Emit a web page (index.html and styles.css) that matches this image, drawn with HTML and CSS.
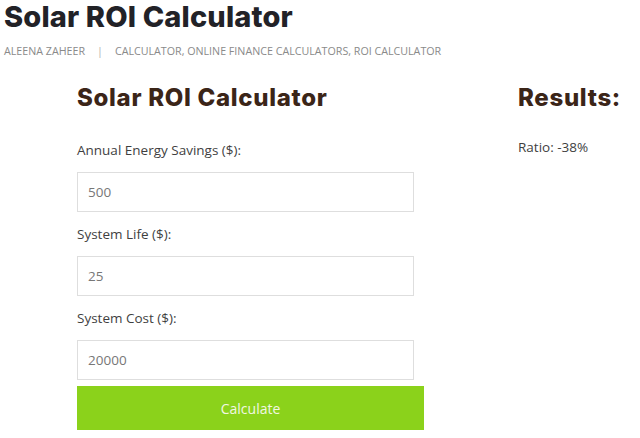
FILE: index.html
```html
<!DOCTYPE html>
<html lang="en">
<head>
    <meta charset="UTF-8">
    <meta name="viewport" content="width=device-width, initial-scale=1.0">
    <title>Solar ROI Calculator</title>
    <link rel="stylesheet" href="styles.css">
</head>
<body>
    <div class="page">
        <h1 class="entry-title">Solar ROI Calculator</h1>
        <div class="entry-meta">
            <span>ALEENA ZAHEER</span>
            <span class="sep">|</span>
            <span>CALCULATOR, ONLINE FINANCE CALCULATORS, ROI CALCULATOR</span>
        </div>

        <div class="calc">
            <!-- formulario -->
            <div class="calc-form">
                <h2>Solar ROI Calculator</h2>
                <label for="savings">Annual Energy Savings ($):</label>
                <input type="text" id="savings" value="500">
                <label for="life">System Life ($):</label>
                <input type="text" id="life" value="25">
                <label for="cost">System Cost ($):</label>
                <input type="text" id="cost" value="20000">
                <button class="btn-calc">Calculate</button>
            </div>
            <!-- resultados -->
            <div class="calc-results">
                <h2>Results:</h2>
                <p>Ratio: -38%</p>
            </div>
        </div>
    </div>
</body>
</html>
```

FILE: styles.css
```css
body {
    margin: 0;
    padding: 0;
    background-color: #fff;
    font-family: "Open Sans", "Liberation Sans", sans-serif;
    color: #3a3a3a;
}

.page {
    padding: 2px 4px 0;
}

.entry-title {
    font-family: "Inter", "DejaVu Sans", sans-serif;
    font-weight: 800;
    font-size: 29px;
    letter-spacing: 0.15px;
    line-height: 30px;
    color: #222227;
    margin: 0;
}

.entry-meta {
    display: flex;
    gap: 12px;
    font-size: 10.7px;
    color: #8a8a8a;
    margin-top: 12px;
    line-height: 14px;
}

.entry-meta .sep {
    color: #b0b0b0;
}

.calc {
    display: flex;
    margin-top: 26px;
    padding-left: 73px;
}

.calc-form {
    width: 347px;
    display: flex;
    flex-direction: column;
}

.calc h2 {
    font-family: "Inter", "DejaVu Sans", sans-serif;
    font-weight: 800;
    font-size: 24px;
    letter-spacing: 0.7px;
    line-height: 28px;
    color: #3b2518;
    margin: 0 0 29px;
}

.calc-form label {
    font-size: 13.5px;
    color: #3f3f3f;
    line-height: 18px;
    margin-bottom: 13px;
}

.calc-form input {
    width: 337px;
    height: 40px;
    box-sizing: border-box;
    border: 1px solid #dedede;
    padding: 0 10px;
    font-family: "Open Sans", "Liberation Sans", sans-serif;
    font-size: 13.5px;
    color: #777;
    margin-bottom: 13px;
    outline: none;
}

.btn-calc {
    margin-top: -7px;
    height: 44px;
    width: 347px;
    border: none;
    background-color: #8bd21b;
    color: #f2f7e4;
    font-family: "Open Sans", "Liberation Sans", sans-serif;
    font-size: 14px;
    cursor: pointer;
}

.calc-results {
    margin-left: 94px;
}

.calc-results p {
    font-size: 13.5px;
    color: #3f3f3f;
    margin: 0;
    margin-top: -3px;
}
```
